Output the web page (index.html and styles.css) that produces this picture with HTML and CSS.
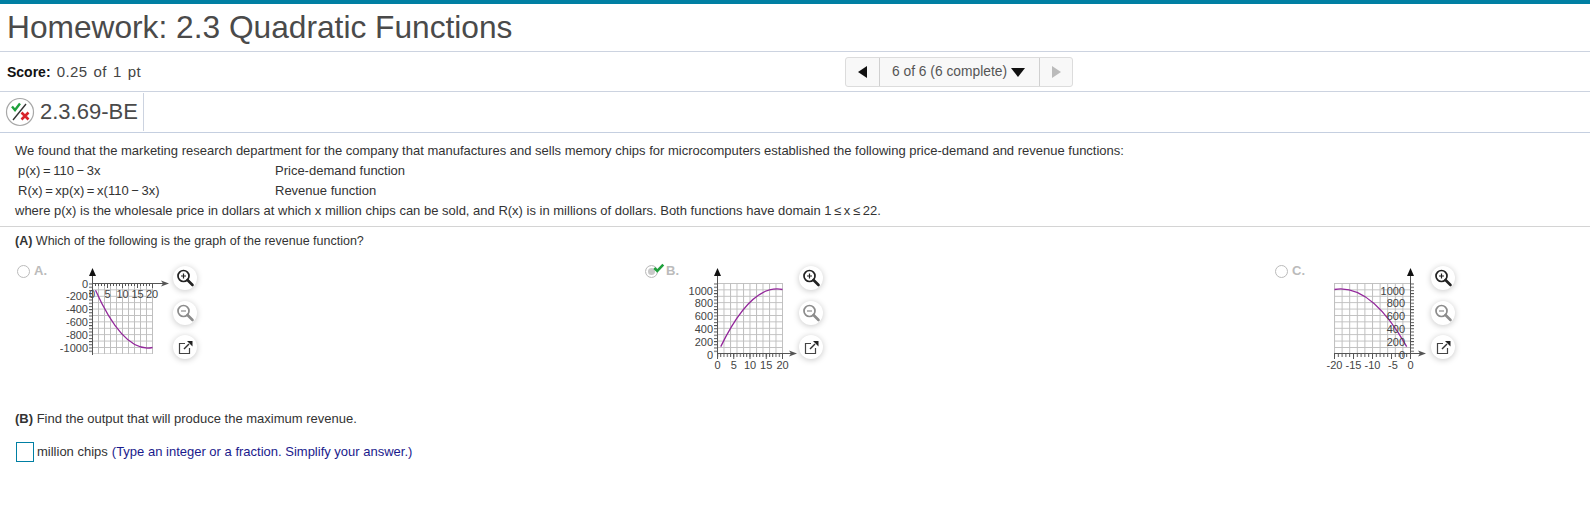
FILE: index.html
```
<!DOCTYPE html>
<html lang="en">
<head>
<meta charset="utf-8">
<title>Homework: 2.3 Quadratic Functions</title>
<link rel="stylesheet" href="styles.css">
</head>
<body>
<svg class="defs" width="0" height="0" aria-hidden="true">
  <defs>
    <pattern id="grid-a" x="32" y="19" width="6" height="6.4" patternUnits="userSpaceOnUse"><path d="M.5 0V6.400M0 .5H6" fill="none" stroke="#bfbfbf"/></pattern>
    <pattern id="grid-b" x="32" y="19" width="6.500" height="6.400" patternUnits="userSpaceOnUse"><path d="M.5 0V6.400M0 .5H6.500" fill="none" stroke="#bfbfbf"/></pattern>
    <pattern id="grid-c" x="8" y="19" width="7.600" height="6.400" patternUnits="userSpaceOnUse"><path d="M.5 0V6.400M0 .5H7.600" fill="none" stroke="#bfbfbf"/></pattern>
    <pattern id="tick-y" y="19.500" width="4" height="3.200" patternUnits="userSpaceOnUse"><path d="M0 .5H4" stroke="#555"/></pattern>
    <pattern id="tick-a" x="32" width="3" height="3" patternUnits="userSpaceOnUse"><path d="M.5 0V3" stroke="#555"/></pattern>
    <pattern id="major-a" x="32" width="15" height="5" patternUnits="userSpaceOnUse"><path d="M.5 0V5" stroke="#555"/></pattern>
    <pattern id="tick-b" x="32" width="3.250" height="3" patternUnits="userSpaceOnUse"><path d="M.5 0V3" stroke="#555"/></pattern>
    <pattern id="major-b" x="32" width="16.250" height="5" patternUnits="userSpaceOnUse"><path d="M.5 0V5" stroke="#555"/></pattern>
    <pattern id="tick-c" x="8" width="3.800" height="3" patternUnits="userSpaceOnUse"><path d="M.5 0V3" stroke="#555"/></pattern>
    <pattern id="major-c" x="8" width="19" height="5" patternUnits="userSpaceOnUse"><path d="M.5 0V5" stroke="#555"/></pattern>
    <symbol id="zoom-in" viewBox="0 0 24 24"><circle cx="10.500" cy="10" r="5.500" fill="none" stroke="#222" stroke-width="1.700"/><path d="M14.500 14l5 5" stroke="#222" stroke-width="2.600" stroke-linecap="round"/><path d="M8 10h5M10.500 7.500v5" stroke="#222" stroke-width="1.200"/></symbol>
    <symbol id="zoom-out" viewBox="0 0 24 24"><circle cx="10.500" cy="10" r="5.500" fill="none" stroke="#8c8c8c" stroke-width="1.700"/><path d="M14.500 14l5 5" stroke="#8c8c8c" stroke-width="2.600" stroke-linecap="round"/><path d="M8 10h5" stroke="#8c8c8c" stroke-width="1.200"/></symbol>
    <symbol id="popout" viewBox="0 0 24 24"><path d="M12 8.500H6.500v10h10v-5.500" fill="none" stroke="#444" stroke-width="1.200"/><path d="M11 14l5-5" stroke="#333" stroke-width="1.400"/><path d="M14 6h5.500v5.500z" fill="#222"/></symbol>
  </defs>
</svg>

<header class="title-bar"><h1>Homework: 2.3 Quadratic Functions</h1></header>

<div class="score-row">
  <div class="score"><b>Score:</b> 0.25 of 1 pt</div>
  <nav class="pager">
    <span class="pager-btn prev"><i class="tri tri-left"></i></span>
    <span class="pager-mid">6 of 6 (6 complete)<i class="tri tri-down"></i></span>
    <span class="pager-btn next"><i class="tri tri-right"></i></span>
  </nav>
</div>

<div class="q-row">
  <div class="q-id">
    <svg class="status" width="30" height="30" viewBox="0 0 30 30">
      <circle cx="15" cy="15" r="13.500" fill="#fff" stroke="#a8a8a8" stroke-width="1.200"/>
      <path d="M7 9.500l3 3.500 5-6.500" fill="none" stroke="#1fa03c" stroke-width="2.400"/>
      <path d="M8 23L21 7" stroke="#333" stroke-width="1.300"/>
      <path d="M16.500 15.500l7 7M23.500 15.500l-7 7" stroke="#d8232a" stroke-width="2.600"/>
    </svg>
    <span>2.3.69-BE</span>
  </div>
</div>

<section class="intro">
  <p>We found that the marketing research department for the company that manufactures and sells memory chips for microcomputers established the following price-demand and revenue functions:</p>
  <div class="fn-table">
    <span>p(x) = 110 − 3x</span><span>Price-demand function</span>
    <span>R(x) = xp(x) = x(110 − 3x)</span><span>Revenue function</span>
  </div>
  <p>where p(x) is the wholesale price in dollars at which x million chips can be sold, and R(x) is in millions of dollars. Both functions have domain <span class="math">1 ≤ x ≤ 22.</span></p>
</section>

<section class="part-a">
  <p class="prompt prompt-a"><b>(A)</b> Which of the following is the graph of the revenue function?</p>
  <div class="choices">

    <div class="choice choice-a">
      <label class="opt"><i class="radio"></i><b>A.</b></label>
      <svg class="graph graph-a" width="112" height="100" viewBox="0 0 112 100">
        <rect x="32" y="19" width="61" height="71" fill="url(#grid-a)"/>
        <rect x="29" y="19" width="4" height="71" fill="url(#tick-y)"/>
        <rect x="32" y="19" width="61" height="3" fill="url(#tick-a)"/>
        <rect x="32" y="19" width="61" height="5" fill="url(#major-a)"/>
        <path d="M32.500 8V91M32 19.500H106" stroke="#555" fill="none"/>
        <path d="M32.500 4l-3.500 8h7z" fill="#111"/><path d="M109 19.500l-8-3 2 3-2 3z" fill="#555"/>
        <path d="M35.500 26.300Q64 89.600 92.500 83.500" fill="none" stroke="#93279b" stroke-width="1.300"/>
        <g class="lbl" text-anchor="end">
          <text x="28" y="23.500">0</text><text x="28" y="36.300">-200</text><text x="28" y="49.100">-400</text><text x="28" y="61.900">-600</text><text x="28" y="74.700">-800</text><text x="28" y="87.500">-1000</text>
        </g>
        <g class="lbl" text-anchor="middle">
          <text x="32" y="34">0</text><text x="47.500" y="34">5</text><text x="62.500" y="34">10</text><text x="77.500" y="34">15</text><text x="92" y="34">20</text>
        </g>
      </svg>
      <div class="tools">
        <span class="tool"><svg width="24" height="24"><use href="#zoom-in"/></svg></span>
        <span class="tool"><svg width="24" height="24"><use href="#zoom-out"/></svg></span>
        <span class="tool"><svg width="24" height="24"><use href="#popout"/></svg></span>
      </div>
    </div>

    <div class="choice choice-b">
      <label class="opt">
        <i class="radio on"></i>
        <svg class="check" width="12" height="10" viewBox="0 0 14 11"><path d="M1.500 5.500l3.500 3.500 7-7.500" fill="none" stroke="#1fa03c" stroke-width="3"/></svg>
        <b>B.</b>
      </label>
      <svg class="graph graph-b" width="118" height="112" viewBox="0 0 118 112">
        <rect x="32" y="19" width="66" height="71" fill="url(#grid-b)"/>
        <rect x="29" y="19" width="4" height="71" fill="url(#tick-y)"/>
        <rect x="32" y="90" width="66" height="3" fill="url(#tick-b)"/>
        <rect x="32" y="90" width="66" height="5" fill="url(#major-b)"/>
        <path d="M32.500 8V90M32 89.500H110" stroke="#555" fill="none"/>
        <path d="M32.500 4l-3.500 8h7z" fill="#111"/><path d="M112 89.500l-8-3 2 3-2 3z" fill="#555"/>
        <path d="M35.750 82.650Q66.600 19.400 97.500 25.500" fill="none" stroke="#93279b" stroke-width="1.300"/>
        <g class="lbl" text-anchor="end">
          <text x="28" y="30.500">1000</text><text x="28" y="43.300">800</text><text x="28" y="56.100">600</text><text x="28" y="68.900">400</text><text x="28" y="81.700">200</text><text x="28" y="94.500">0</text>
        </g>
        <g class="lbl" text-anchor="middle">
          <text x="32.500" y="105">0</text><text x="48.700" y="105">5</text><text x="65" y="105">10</text><text x="81.200" y="105">15</text><text x="97.500" y="105">20</text>
        </g>
      </svg>
      <div class="tools">
        <span class="tool"><svg width="24" height="24"><use href="#zoom-in"/></svg></span>
        <span class="tool"><svg width="24" height="24"><use href="#zoom-out"/></svg></span>
        <span class="tool"><svg width="24" height="24"><use href="#popout"/></svg></span>
      </div>
    </div>

    <div class="choice choice-c">
      <label class="opt"><i class="radio"></i><b>C.</b></label>
      <svg class="graph graph-c" width="110" height="112" viewBox="0 0 110 112">
        <rect x="8" y="19" width="77" height="71" fill="url(#grid-c)"/>
        <rect x="84" y="19" width="4" height="71" fill="url(#tick-y)"/>
        <rect x="8" y="90" width="77" height="3" fill="url(#tick-c)"/>
        <rect x="8" y="90" width="77" height="5" fill="url(#major-c)"/>
        <path d="M84.500 8V90M8 89.500H98" stroke="#555" fill="none"/>
        <path d="M84.500 4l-3.500 8h7z" fill="#111"/><path d="M100 89.500l-8-3 2 3-2 3z" fill="#555"/>
        <path d="M80.700 82.650Q44.600 19.400 8.500 25.500" fill="none" stroke="#93279b" stroke-width="1.300"/>
        <g class="lbl" text-anchor="end">
          <text x="79" y="30.500">1000</text><text x="79" y="43.300">800</text><text x="79" y="56.100">600</text><text x="79" y="68.900">400</text><text x="79" y="81.700">200</text><text x="79" y="94.500">0</text>
        </g>
        <g class="lbl" text-anchor="middle">
          <text x="8.500" y="105">-20</text><text x="27.500" y="105">-15</text><text x="46.500" y="105">-10</text><text x="67" y="105">-5</text><text x="84.500" y="105">0</text>
        </g>
      </svg>
      <div class="tools">
        <span class="tool"><svg width="24" height="24"><use href="#zoom-in"/></svg></span>
        <span class="tool"><svg width="24" height="24"><use href="#zoom-out"/></svg></span>
        <span class="tool"><svg width="24" height="24"><use href="#popout"/></svg></span>
      </div>
    </div>

  </div>
</section>

<section class="part-b">
  <p class="prompt"><b>(B)</b> Find the output that will produce the maximum revenue.</p>
  <div class="answer">
    <span class="input"></span>
    <span>million chips</span>
    <span class="hint">(Type an integer or a fraction. Simplify your answer.)</span>
  </div>
</section>
</body>
</html>
```

FILE: styles.css
```
* { box-sizing: border-box; }
html, body { margin: 0; padding: 0; }
body {
  width: 1590px;
  height: 522px;
  overflow: hidden;
  background: #fff;
  color: #333;
  font-family: "Liberation Sans", Arial, sans-serif;
  font-size: 13px;
  line-height: 20px;
}
p { margin: 0; }
.defs { position: absolute; }

.title-bar {
  height: 52px;
  border-top: 4px solid #007fa3;
  border-bottom: 1px solid #ccd3e0;
  padding-left: 7px;
}
h1 {
  margin: 0;
  font-size: 31.700px;
  font-weight: 400;
  line-height: 46px;
  color: #4a4a4a;
}

.score-row {
  height: 40px;
  display: flex;
  align-items: center;
  border-bottom: 1px solid #ccd3e0;
  padding-left: 7px;
  font-size: 15px;
  letter-spacing: .4px;
  word-spacing: 1.500px;
}
.score { color: #444; }
.score b { color: #111; font-size: 14px; letter-spacing: 0; }

.pager {
  position: absolute;
  left: 845px;
  top: 57px;
  width: 228px;
  height: 30px;
  display: flex;
  background: #f8f8f8;
  border: 1px solid #dcdcdc;
  border-radius: 3px;
  color: #555;
  letter-spacing: 0;
  word-spacing: 0;
}
.pager-btn {
  display: flex;
  align-items: center;
  justify-content: center;
}
.prev { width: 34px; border-right: 1px solid #d0d0d0; }
.next { flex: 1; border-left: 1px solid #d0d0d0; }
.pager-mid {
  width: 159px;
  display: flex;
  align-items: center;
  padding-left: 12px;
  font-size: 13.800px;
}
.tri { display: block; width: 0; height: 0; border-style: solid; border-color: transparent; }
.tri-left { border-width: 6.500px 9px 6.500px 0; border-right-color: #111; }
.tri-right { border-width: 6.500px 0 6.500px 9px; border-left-color: #bbb; }
.tri-down { margin-left: 4px; border-width: 9px 7.500px 0 7.500px; border-top-color: #111; }

.q-row {
  height: 40px;
  border-bottom: 1px solid #c5cfe0;
}
.q-id {
  width: 144px;
  height: 38px;
  margin-top: 1px;
  display: flex;
  align-items: center;
  gap: 5px;
  padding-left: 5px;
  border-right: 1px solid #ccd3e0;
  font-size: 22px;
  color: #4a4a4a;
}

.intro {
  height: 94px;
  padding: 8px 0 0 15px;
  border-bottom: 1px solid #d4d4d4;
}
.fn-table {
  display: grid;
  grid-template-columns: 257px auto;
  padding-left: 3px;
  word-spacing: -1px;
}
.fn-table span:nth-child(even) { word-spacing: 0; }
.math { word-spacing: -1px; }

.prompt { padding-left: 15px; }
.prompt-a { font-size: 12.500px; }
.part-a { padding-top: 4px; height: 175px; }
.choices {
  display: grid;
  grid-template-columns: 628px 630px 300px;
  margin: 12px 0 0 17px;
  height: 130px;
}
.choice { display: flex; align-items: flex-start; }
.opt {
  display: flex;
  align-items: center;
  gap: 4px;
  height: 16px;
  color: #bbb;
  position: relative;
  font-size: 13px;
}
.opt b { font-weight: 700; }
.radio {
  display: block;
  width: 13px;
  height: 13px;
  border: 1px solid #bbb;
  border-radius: 50%;
  background: #fff;
}
.radio.on { box-shadow: inset 0 0 0 2px #fff, inset 0 0 0 7px #c8c8c8; }
.check { position: absolute; left: 8px; top: 0; }
.choice-a .opt { width: 43px; }
.choice-b .opt { width: 40px; gap: 8px; }
.choice-c .opt { width: 51px; }
.graph { display: block; margin-top: 1px; flex: none; }
.lbl text { font-size: 11px; fill: #444; font-family: "Liberation Sans", Arial, sans-serif; }
.tools {
  display: flex;
  flex-direction: column;
  gap: 10.500px;
  margin-top: 3px;
}
.choice-a .tools { margin-left: 1px; }
.choice-b .tools { margin-left: -4px; }
.choice-c .tools { margin-left: -5px; }
.tool {
  display: block;
  width: 24px;
  height: 24px;
  background: #fff;
  border-radius: 50%;
  box-shadow: 0 1px 6px rgba(0,0,0,.22);
}
.tool svg { display: block; }

.part-b { padding-top: 7px; }
.answer {
  display: flex;
  align-items: center;
  gap: 4px;
  margin: 13px 0 0 16px;
}
.input {
  display: block;
  width: 18px;
  height: 20px;
  border: 1px solid #007fa3;
  background: #fff;
  margin-right: -1px;
}
.hint { color: #1a1a8c; }
```
